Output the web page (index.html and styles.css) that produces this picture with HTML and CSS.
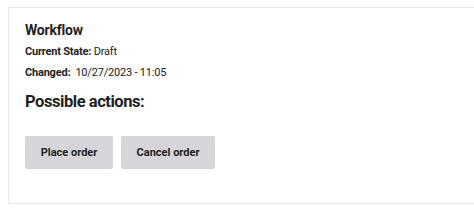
FILE: index.html
```html
<!DOCTYPE html>
<html lang="en">

<head>
    <meta charset="UTF-8">
    <meta name="viewport" content="width=device-width, initial-scale=1.0">
    <title>Workflow</title>
    <link rel="stylesheet" href="styles.css">
</head>

<body>
    <div class="card">
        <h3 class="title">Workflow</h3>
        <p class="info"><b>Current State:</b> Draft</p>
        <p class="info"><b>Changed:</b>&nbsp; 10/27/2023 - 11:05</p>
        <h2 class="actions-title">Possible actions:</h2>
        <div class="actions">
            <button class="btn place">Place order</button>
            <button class="btn cancel">Cancel order</button>
        </div>
    </div>
</body>

</html>
```

FILE: styles.css
```css
* {
    margin: 0;
    padding: 0;
    box-sizing: border-box;
}

body {
    background-color: #fff;
    font-family: Roboto, "Liberation Sans", sans-serif;
    color: #1f1f1f;
    overflow: hidden;
}

.card {
    margin: 7px 0 0 8px;
    width: 480px;
    height: 197px;
    border: 1px solid #e6e6e6;
    padding: 12px 16px 0 16px;
}

.title {
    font-size: 14px;
    line-height: 20px;
    font-weight: 700;
    letter-spacing: -0.2px;
}

.info {
    font-size: 11px;
    line-height: 16px;
    margin-top: 4px;
    color: #222;
    letter-spacing: -0.2px;
}

.info + .info {
    margin-top: 5px;
}

.info b {
    font-weight: 700;
}

.actions-title {
    font-size: 16.5px;
    line-height: 22px;
    font-weight: 700;
    margin-top: 10px;
    letter-spacing: -0.45px;
}

.actions {
    display: flex;
    gap: 8px;
    margin-top: 23px;
}

.btn {
    height: 33px;
    border: none;
    border-radius: 2px;
    background-color: #d5d5da;
    color: #222;
    font-family: Roboto, "Liberation Sans", sans-serif;
    font-size: 11px;
    font-weight: 700;
}

.place {
    width: 88px;
}

.cancel {
    width: 94px;
}
```
